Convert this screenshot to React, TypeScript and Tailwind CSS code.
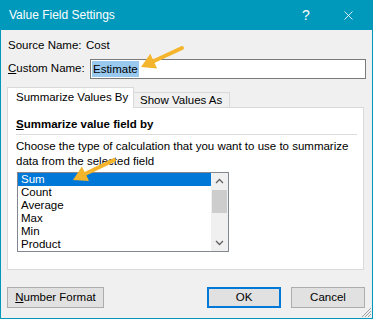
import { X } from 'lucide-react';

const font = { fontFamily: '"Segoe UI", "Liberation Sans", Arial, sans-serif' };

const items = ['Sum', 'Count', 'Average', 'Max', 'Min', 'Product'];

function Arrow({ d, head }: { d: string; head: string }) {
  return (
    <>
      <path d={d} stroke="#f4b52c" strokeWidth="4" strokeLinecap="round" fill="none" />
      <polygon points={head} fill="#f4b52c" />
    </>
  );
}

export default function App() {
  return (
    <div className="relative w-[373px] h-[319px] bg-[#0099bc] flex flex-col text-[11.5px] text-black" style={font}>
      {/* title bar */}
      <div className="h-[30px] flex items-center text-white pl-[9px] text-[12px]">
        <span className="flex-1 whitespace-nowrap">Value Field Settings</span>
        <span className="w-[20px] text-center text-[14px] mr-[25px]">?</span>
        <X className="w-[15px] h-[15px] mr-[17px]" strokeWidth={1.3} />
      </div>

      <div className="flex-1 mx-[1px] mb-[1px] bg-[#f0f0f0] pl-[6px] pr-[6px] pt-[8px] flex flex-col">
        <div className="flex h-[15px] items-center leading-[15px]">
          <span className="w-[79px] pl-[1px] whitespace-nowrap">Source Name:</span>
          <span>Cost</span>
        </div>

        <div className="flex items-center mt-[6px]">
          <span className="w-[83px] pl-[1px] whitespace-nowrap">
            <u>C</u>ustom Name:
          </span>
          <div className="flex-1 h-[20px] bg-white border border-[#7a7a7a] flex items-center pl-[1px]">
            <span className="bg-[#99c9ef] px-[1px] leading-[16px]">Estimate</span>
          </div>
        </div>

        {/* tabs */}
        <div className="flex items-end mt-[8px] h-[21px]">
          <div className="h-[21px] w-[127px] bg-white border border-[#d9d9d9] border-b-0 pl-[8px] pt-[2px] leading-[15px] relative z-10 whitespace-nowrap">
            Summarize Values By
          </div>
          <div className="h-[16px] w-[96px] bg-[#f0f0f0] border border-[#d9d9d9] border-l-0 border-b-0 pl-[6px] leading-[15px] whitespace-nowrap">
            Show Values As
          </div>
        </div>

        <div className="w-[357px] h-[163px] bg-white border border-[#d9d9d9] -mt-[1px] px-[8px] pt-[9px]">
          <div className="font-bold leading-[15px] whitespace-nowrap">
            <u>S</u>ummarize value field by
          </div>
          <div className="h-px bg-[#dcdcdc] mt-[2px] mr-[-2px]" />
          <div className="leading-[15px] mt-[4px]">
            Choose the type of calculation that you want to use to summarize data from the selected field
          </div>
          <div className="mt-[3px] ml-[1px] w-[212px] h-[80px] border border-[#828790] flex">
            <div className="flex-1 flex flex-col">
              {items.map((it, i) => (
                <div
                  key={it}
                  className={
                    'h-[13px] leading-[13px] pl-[3px] ' + (i === 0 ? 'bg-[#0078d7] text-white' : '')
                  }
                >
                  {it}
                </div>
              ))}
            </div>
            <div className="w-[17px] bg-[#f0f0f0] flex flex-col items-center">
              <svg width="17" height="17" viewBox="0 0 17 17">
                <path d="M5 10 L8.5 6.5 L12 10" stroke="#606060" strokeWidth="1.3" fill="none" />
              </svg>
              <div className="w-[15px] h-[23px] bg-[#cdcdcd]" />
              <div className="flex-1" />
              <svg width="17" height="17" viewBox="0 0 17 17">
                <path d="M5 7 L8.5 10.5 L12 7" stroke="#606060" strokeWidth="1.3" fill="none" />
              </svg>
            </div>
          </div>
        </div>

        {/* buttons */}
        <div className="flex mt-[17px] h-[21px]">
          <button className="w-[97px] h-[21px] bg-[#e1e1e1] border border-[#adadad] leading-[19px] whitespace-nowrap">
            <u>N</u>umber Format
          </button>
          <div className="flex-1" />
          <button className="w-[74px] h-[21px] bg-[#e1e1e1] border-2 border-[#0078d7] leading-[17px]">OK</button>
          <button className="w-[74px] h-[21px] bg-[#e1e1e1] border border-[#adadad] ml-[10px] mr-[1px] leading-[19px]">
            Cancel
          </button>
        </div>
      </div>

      {/* resize grip */}
      <svg className="absolute right-[1px] bottom-[1px]" width="10" height="10" viewBox="0 0 10 10">
        <path d="M9 3 L3 9 M9 6 L6 9 M9 0 L0 9" stroke="#a0a0a0" strokeWidth="1" />
      </svg>

      {/* callout arrows */}
      <svg className="absolute left-0 top-0 pointer-events-none" width="373" height="319">
        <Arrow d="M182 48 L154 61" head="157.1,68.4 150.3,53.8 141,67" />
        <Arrow d="M114 160 L86 173.5" head="89.1,180.9 81.9,166.5 73,180" />
      </svg>
    </div>
  );
}
